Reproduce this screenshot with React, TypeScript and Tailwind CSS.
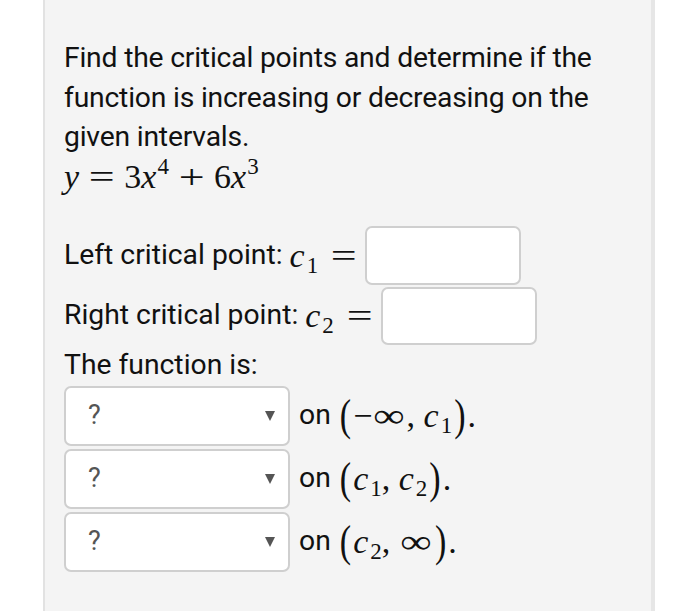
import React from 'react';

const serif = "font-['Liberation_Serif','DejaVu_Serif',serif]";

function V({ children }: { children: React.ReactNode }) {
  return <span className="italic">{children}</span>;
}

function Op({ children }: { children: React.ReactNode }) {
  return <span className="inline-block scale-x-[1.35] mx-[13px]">{children}</span>;
}

function C({ n }: { n: number }) {
  return (
    <span>
      <V>c</V>
      <span className="text-[23px] relative top-[6px] ml-[2px]">{n}</span>
    </span>
  );
}

function Inf() {
  return <span className="inline-block scale-x-[1.3] mx-[5px]">∞</span>;
}

function Paren({ children }: { children: React.ReactNode }) {
  return <span className="inline-block scale-y-[1.3] origin-center mx-[2px]">{children}</span>;
}

function Select() {
  return (
    <div className="w-[226px] h-[60px] rounded-[7px] border-2 border-[#cfcfcf] bg-white flex items-center justify-between pl-[22px] pr-[13px]">
      <span className="text-[27px] text-[#555]">?</span>
      <svg width="10" height="11" viewBox="0 0 10 11">
        <path d="M0 1 L10 1 L5 11 Z" fill="#555" />
      </svg>
    </div>
  );
}

export default function App() {
  const rows = [
    <>
      <Paren>(</Paren>−<Inf />, <C n={1} />
      <Paren>)</Paren>.
    </>,
    <>
      <Paren>(</Paren>
      <C n={1} />, <C n={2} />
      <Paren>)</Paren>.
    </>,
    <>
      <Paren>(</Paren>
      <C n={2} />, <Inf />
      <Paren>)</Paren>.
    </>,
  ];

  return (
    <div className="min-h-screen bg-white font-['Roboto','Liberation_Sans',sans-serif] text-[#111]">
      <div className="ml-[43px] w-[612px] min-h-[611px] bg-[#f4f4f4] border-l-2 border-[#e2e2e2] border-r-[4px] border-r-[#e6e6e6] pt-[38px] pl-[19px]">
        <p className="text-[28.3px] leading-[39.5px] tracking-[-0.2px] w-[560px]">
          Find the critical points and determine if the function is increasing or decreasing on the given intervals.
        </p>
        <div className={`${serif} text-[34px] leading-[40px]`}>
          <V>y</V>
          <Op>=</Op>3<V>x</V>
          <span className="text-[23px] relative -top-[14px] ml-[1px]">4</span>
          <Op>+</Op>6<V>x</V>
          <span className="text-[23px] relative -top-[14px] ml-[1px]">3</span>
        </div>

        <div className="mt-[25px] flex items-center h-[59px] text-[28.3px]">
          <span>Left critical point:&nbsp;</span>
          <span className={`${serif} text-[34px]`}>
            <C n={1} />
            <span className="inline-block scale-x-[1.35] ml-[16px]">=</span>
          </span>
          <div className="ml-[12px] w-[156px] h-[59px] rounded-[7px] border-2 border-[#cfcfcf] bg-white" />
        </div>
        <div className="mt-[2px] flex items-center h-[58px] text-[28.3px]">
          <span>Right critical point:&nbsp;</span>
          <span className={`${serif} text-[34px]`}>
            <C n={2} />
            <span className="inline-block scale-x-[1.35] ml-[16px]">=</span>
          </span>
          <div className="ml-[12px] w-[156px] h-[58px] rounded-[7px] border-2 border-[#cfcfcf] bg-white" />
        </div>

        <p className="text-[28.3px] leading-[40px]">The function is:</p>

        <div className="mt-[1px] flex flex-col gap-[3px]">
          {rows.map((r, i) => (
            <div key={i} className="flex items-center">
              <Select />
              <span className="ml-[9px] text-[28.3px]">on&nbsp;</span>
              <span className={`${serif} text-[34px]`}>{r}</span>
            </div>
          ))}
        </div>
      </div>
    </div>
  );
}
